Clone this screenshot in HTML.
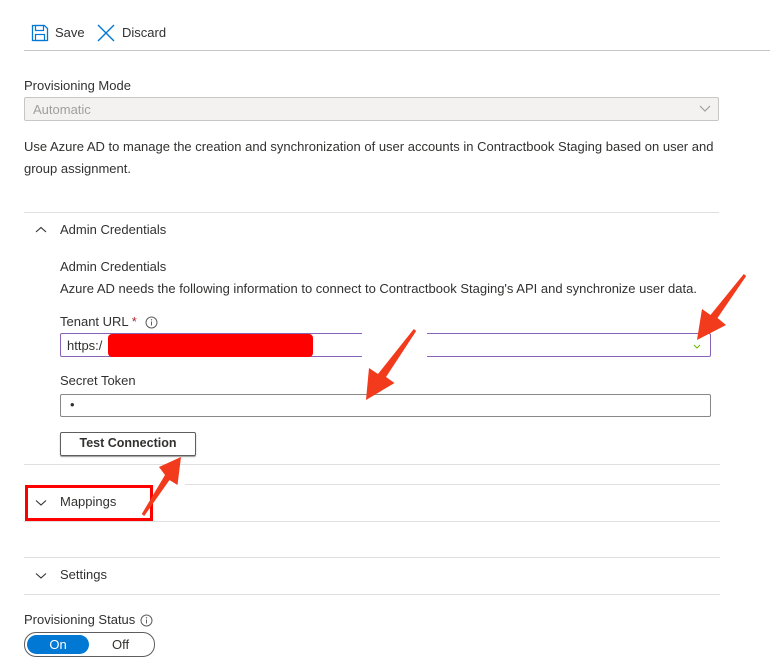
<!DOCTYPE html>
<html><head><meta charset="utf-8"><style>
body{margin:0;width:782px;height:671px;background:#fff;font-family:"Liberation Sans",sans-serif;font-size:13px;color:#323130;position:relative;overflow:hidden}
.a{position:absolute;white-space:nowrap}
.ln{position:absolute;height:1px;background:#e1dfdd}
.inp{position:absolute;box-sizing:border-box;border:1px solid #8a8886;border-radius:2px}
</style></head><body>
<svg class="a" style="left:31px;top:24px" width="18" height="18" viewBox="0 0 18 18"><path d="M1.5 1.5h12l3 3v12h-15z" fill="none" stroke="#0078d4" stroke-width="1.3"/><rect x="4.5" y="1.5" width="8" height="5" fill="none" stroke="#0078d4" stroke-width="1.2"/><rect x="4.5" y="10.5" width="9" height="6" fill="none" stroke="#0078d4" stroke-width="1.2"/></svg>
<div class="a" style="left:55px;top:25px">Save</div>
<svg class="a" style="left:97px;top:24px" width="18" height="18" viewBox="0 0 18 18"><path d="M1 1L17 17M17 1L1 17" stroke="#0078d4" stroke-width="1.4"/></svg>
<div class="a" style="left:122px;top:25px">Discard</div>
<div class="ln" style="left:24px;top:50px;width:746px;background:#c8c6c4"></div>

<div class="a" style="left:24px;top:78px">Provisioning Mode</div>
<div class="inp" style="left:24px;top:97px;width:695px;height:24px;background:#f3f2f1;border-color:#c8c6c4"></div>
<div class="a" style="left:33px;top:102px;color:#a19f9d">Automatic</div>
<svg class="a" style="left:699px;top:104px" width="12" height="10"><path d="M1 2l5 5 5-5" fill="none" stroke="#a19f9d" stroke-width="1.2"/></svg>
<div class="a" style="left:24px;top:139px">Use Azure AD to manage the creation and synchronization of user accounts in Contractbook Staging based on user and</div>
<div class="a" style="left:24px;top:161px">group assignment.</div>

<div class="ln" style="left:24px;top:212px;width:695px"></div>
<svg class="a" style="left:35px;top:226px" width="12" height="8"><path d="M1 6l5-4.5 5 4.5" fill="none" stroke="#323130" stroke-width="1.1"/></svg>
<div class="a" style="left:60px;top:222px">Admin Credentials</div>
<div class="a" style="left:60px;top:259px">Admin Credentials</div>
<div class="a" style="left:60px;top:281px">Azure AD needs the following information to connect to Contractbook Staging's API and synchronize user data.</div>
<div class="a" style="left:60px;top:314px">Tenant URL <span style="color:#a4262c">*</span></div>
<svg class="a" style="left:145px;top:316px" width="13" height="13"><circle cx="6.5" cy="6.5" r="5.5" fill="none" stroke="#605e5c"/><path d="M6.5 5.5v4" stroke="#605e5c"/><circle cx="6.5" cy="3.8" r=".7" fill="#605e5c"/></svg>
<div class="inp" style="left:60px;top:333px;width:651px;height:24px;border-color:#8764b8"></div>
<div class="a" style="left:362px;top:325px;width:65px;height:40px;background:#fff"></div>
<div class="a" style="left:67px;top:338px">https:/</div>
<div class="a" style="left:108px;top:334px;width:205px;height:23px;background:#ff0000;border-radius:4px"></div>
<svg class="a" style="left:693px;top:344px" width="8" height="6"><path d="M1 1l3 3 3-3" fill="none" stroke="#6bb700" stroke-width="1"/></svg>
<div class="a" style="left:60px;top:373px">Secret Token</div>
<div class="inp" style="left:60px;top:394px;width:651px;height:23px"></div>
<div class="a" style="left:70px;top:397px">•</div>
<div class="inp" style="left:60px;top:432px;width:136px;height:24px;border-color:#605e5c;box-shadow:0 1px 1px #999"></div>
<div class="a" style="left:60px;top:436px;width:136px;text-align:center;font-weight:bold;color:#323130;font-size:12.5px">Test Connection</div>

<div class="ln" style="left:24px;top:464px;width:696px"></div>
<div class="ln" style="left:185px;top:484px;width:535px"></div>
<div class="a" style="left:25px;top:485px;width:122px;height:30px;border:3px solid #ff0000"></div>
<svg class="a" style="left:35px;top:499px" width="12" height="8"><path d="M1 1.5l5 4.5 5-4.5" fill="none" stroke="#323130" stroke-width="1.1"/></svg>
<div class="a" style="left:60px;top:494px">Mappings</div>
<div class="ln" style="left:24px;top:521px;width:696px"></div>

<div class="ln" style="left:24px;top:557px;width:696px"></div>
<svg class="a" style="left:35px;top:572px" width="12" height="8"><path d="M1 1.5l5 4.5 5-4.5" fill="none" stroke="#323130" stroke-width="1.1"/></svg>
<div class="a" style="left:60px;top:567px">Settings</div>
<div class="ln" style="left:24px;top:594px;width:696px"></div>
<div class="a" style="left:24px;top:612px">Provisioning Status</div>
<svg class="a" style="left:140px;top:614px" width="13" height="13"><circle cx="6.5" cy="6.5" r="5.5" fill="none" stroke="#605e5c"/><path d="M6.5 5.5v4" stroke="#605e5c"/><circle cx="6.5" cy="3.8" r=".7" fill="#605e5c"/></svg>
<div class="a" style="left:24px;top:632px;width:129px;height:23px;border:1px solid #605e5c;border-radius:12px"></div>
<div class="a" style="left:27px;top:635px;width:62px;height:19px;background:#0078d4;border-radius:10px"></div>
<div class="a" style="left:27px;top:637px;width:62px;text-align:center;color:#fff">On</div>
<div class="a" style="left:112px;top:637px">Off</div>

<svg class="a" style="left:0;top:0" width="782" height="671">
<g fill="#f23a1c">
<polygon points="746.2,276 717.5,318 726,325 697,340 702,309 710.5,315 743.8,274"/>
<polygon points="416.2,331 386,377 394.5,383 366,400 369,368 378,374 413.8,329"/>
<polygon points="144.2,516 169.5,480 177.5,485 181,457 159,467 165,475 141.8,514"/>
</g></svg>
</body></html>
